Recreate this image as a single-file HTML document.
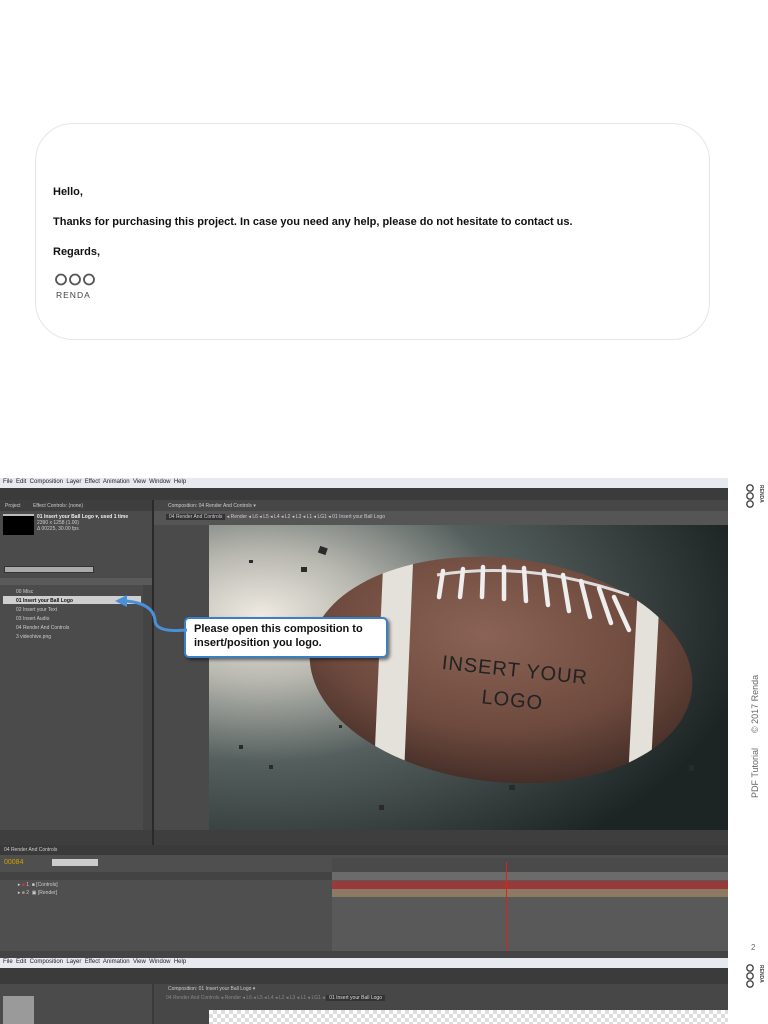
<!DOCTYPE html>
<html><head><meta charset="utf-8"><style>
*{margin:0;padding:0;box-sizing:border-box}
body{width:768px;height:1024px;background:#fff;position:relative;overflow:hidden;font-family:"Liberation Sans",sans-serif}
.card{position:absolute;left:35px;top:123px;width:675px;height:217px;border:1px solid #e6e6e6;border-radius:38px}
.t{position:absolute;left:53px;font-weight:bold;font-size:11px;color:#111}
.logo{position:absolute;left:55px;top:273px}
.ab{position:absolute}
.m{font-size:6px;color:#222}
.s{font-size:5px;color:#ccc}
</style></head><body>
<div class="card"></div>
<div class="t" style="top:186px">Hello,</div>
<div class="t" style="top:216px">Thanks for purchasing this project. In case you need any help, please do not hesitate to contact us.</div>
<div class="t" style="top:246px">Regards,</div>
<svg class="logo" width="46" height="30"><g fill="none" stroke="#555" stroke-width="1.8"><circle cx="6" cy="6.5" r="5"/><circle cx="20" cy="6.5" r="5"/><circle cx="34" cy="6.5" r="5"/></g><text x="1" y="25" font-family="Liberation Sans" font-size="8.5" fill="#444" letter-spacing="1">RENDA</text></svg>

<div class="ab" style="left:0;top:478px;width:728px;height:10px;background:#e6eaf0"></div>
<div class="ab m" style="left:3px;top:479px">File&nbsp; Edit&nbsp; Composition&nbsp; Layer&nbsp; Effect&nbsp; Animation&nbsp; View&nbsp; Window&nbsp; Help</div>
<div class="ab" style="left:0;top:488px;width:728px;height:12px;background:#3b3b3b"></div>
<div class="ab" style="left:0;top:500px;width:152px;height:345px;background:#4b4b4b"></div>
<div class="ab" style="left:0;top:500px;width:152px;height:11px;background:#3e3e3e"></div>
<div class="ab s" style="left:5px;top:503px">Project &nbsp;&nbsp;&nbsp;&nbsp;&nbsp;&nbsp;&nbsp; Effect Controls: (none)</div>
<div class="ab" style="left:3px;top:514px;width:31px;height:21px;background:#000;border-top:2px solid #bbb"></div>
<div class="ab s" style="left:37px;top:514px;color:#eee;font-weight:bold">01 Insert your Ball Logo ▾, used 1 time</div>
<div class="ab s" style="left:37px;top:520px">2390 x 1258 (1.00)<br>Δ 00225, 30.00 fps</div>
<div class="ab" style="left:4px;top:566px;width:90px;height:7px;background:#aaa;border:1px solid #333"></div>
<div class="ab" style="left:0;top:578px;width:152px;height:7px;background:#5a5a5a"></div>
<div class="ab" style="left:3px;top:596px;width:138px;height:8px;background:#cfcfcf"></div>
<div class="ab s" style="left:16px;top:588px;line-height:9px">00 Misc<br><b style="color:#111">01 Insert your Ball Logo</b><br>02 Insert your Text<br>03 Insert Audio<br>04 Render And Controls<br>3 videohive.png</div>
<div class="ab" style="left:143px;top:585px;width:9px;height:245px;background:#444"></div>
<div class="ab" style="left:0;top:830px;width:728px;height:15px;background:#3e3e3e"></div>
<div class="ab" style="left:152px;top:500px;width:2px;height:345px;background:#2a2a2a"></div>
<div class="ab" style="left:154px;top:500px;width:574px;height:25px;background:#474747"></div>
<div class="ab" style="left:154px;top:511px;width:574px;height:14px;background:#555"></div>
<div class="ab s" style="left:168px;top:503px">Composition: 04 Render And Controls ▾</div>
<div class="ab s" style="left:166px;top:514px"><span style="background:#333;padding:0 3px">04 Render And Controls</span> ◂ Render ◂ L6 ◂ L5 ◂ L4 ◂ L2 ◂ L3 ◂ L1 ◂ LG1 ◂ 01 Insert your Ball Logo</div>
<div class="ab" style="left:154px;top:525px;width:55px;height:305px;background:#4a4a4a"></div>
<svg class="ab" style="left:209px;top:525px" width="519" height="305">
<defs>
<radialGradient id="bg" cx="0.1" cy="0.3" r="0.95"><stop offset="0" stop-color="#f0ebe2"/><stop offset="0.22" stop-color="#b8b8b0"/><stop offset="0.5" stop-color="#55605e"/><stop offset="1" stop-color="#1d2424"/></radialGradient>
<radialGradient id="ball" cx="0.45" cy="0.35" r="0.7"><stop offset="0" stop-color="#8a6355"/><stop offset="0.6" stop-color="#6e4a3e"/><stop offset="1" stop-color="#3e2a24"/></radialGradient>
<clipPath id="bc"><ellipse cx="292" cy="145" rx="192" ry="112" transform="rotate(6 292 145)"/></clipPath>
</defs>
<rect width="519" height="305" fill="url(#bg)"/>
<ellipse cx="292" cy="145" rx="192" ry="112" transform="rotate(6 292 145)" fill="url(#ball)"/>
<g clip-path="url(#bc)" fill="#e4e0da"><polygon points="175,20 205,15 195,250 165,245"/><polygon points="430,40 452,45 440,280 418,275"/></g>
<path d="M228 50 Q320 35 420 70" stroke="#ddd" stroke-width="3" fill="none"/>
<g stroke="#eee" stroke-width="4.5" stroke-linecap="round"><line x1="234" y1="46" x2="230" y2="72"/><line x1="254" y1="44" x2="251" y2="72"/><line x1="274" y1="42" x2="273" y2="72"/><line x1="295" y1="42" x2="295" y2="74"/><line x1="315" y1="43" x2="317" y2="76"/><line x1="335" y1="46" x2="339" y2="80"/><line x1="354" y1="50" x2="360" y2="86"/><line x1="372" y1="56" x2="381" y2="92"/><line x1="390" y1="63" x2="402" y2="98"/><line x1="405" y1="72" x2="420" y2="105"/></g>
<text x="232" y="150" font-family="Liberation Sans" font-size="20" fill="#222" transform="rotate(6 290 150)" letter-spacing="1">INSERT YOUR</text>
<text x="275" y="180" font-family="Liberation Sans" font-size="20" fill="#222" transform="rotate(6 290 150)" letter-spacing="1">LOGO</text>
<g fill="#2a2a2a"><rect x="110" y="22" width="8" height="7" transform="rotate(20 114 25)"/><rect x="92" y="42" width="6" height="5"/><rect x="40" y="35" width="4" height="3"/><rect x="300" y="260" width="6" height="5"/><rect x="480" y="240" width="5" height="6"/><rect x="60" y="240" width="4" height="4"/><rect x="170" y="280" width="5" height="5"/><rect x="30" y="220" width="4" height="4"/><rect x="130" y="200" width="3" height="3"/></g>
</svg>
<div class="ab" style="left:184px;top:617px;width:204px;height:41px;background:#fff;border:2px solid #3b7fc4;border-radius:5px;box-shadow:2px 2px 3px rgba(0,0,0,.5);font-size:11px;font-weight:bold;padding:3px 8px;line-height:14px;color:#111">Please open this composition to insert/position you logo.</div>
<svg class="ab" style="left:95px;top:595px" width="95" height="45"><path d="M92 35 Q60 38 60 25 Q58 8 30 6" stroke="#4a90d9" stroke-width="3" fill="none"/><polygon points="20,6 32,0 32,12" fill="#4a90d9"/></svg>
<div class="ab" style="left:0;top:845px;width:728px;height:113px;background:#4f4f4f"></div>
<div class="ab" style="left:0;top:845px;width:728px;height:10px;background:#3a3a3a"></div>
<div class="ab s" style="left:4px;top:847px">04 Render And Controls</div>
<div class="ab" style="left:4px;top:859px;font-size:7px;color:#d4a000">00084</div>
<div class="ab" style="left:52px;top:859px;width:46px;height:7px;background:#ccc"></div>
<div class="ab" style="left:0;top:872px;width:332px;height:8px;background:#434343"></div>
<div class="ab s" style="left:4px;top:881px;line-height:8px">&nbsp;&nbsp;&nbsp;&nbsp;&nbsp;&nbsp;&nbsp;&nbsp;&nbsp;&nbsp;▸ <span style="color:#c33">■</span> 1 &nbsp;■ [Controls]<br>&nbsp;&nbsp;&nbsp;&nbsp;&nbsp;&nbsp;&nbsp;&nbsp;&nbsp;&nbsp;▸ <span style="color:#a98">■</span> 2 &nbsp;▣ [Render]</div>
<div class="ab" style="left:332px;top:858px;width:396px;height:100px;background:#595959"></div>
<div class="ab" style="left:332px;top:858px;width:396px;height:14px;background:#4a4a4a"></div>
<div class="ab" style="left:332px;top:872px;width:396px;height:8px;background:#6b6b6b"></div>
<div class="ab" style="left:332px;top:881px;width:396px;height:8px;background:#983a3a"></div>
<div class="ab" style="left:332px;top:889px;width:396px;height:8px;background:#8c7a62"></div>
<div class="ab" style="left:506px;top:862px;width:1px;height:96px;background:#e02020"></div>
<div class="ab" style="left:0;top:951px;width:728px;height:7px;background:#444"></div>
<div class="ab" style="left:0;top:958px;width:728px;height:10px;background:#e6eaf0"></div>
<div class="ab m" style="left:3px;top:959px">File&nbsp; Edit&nbsp; Composition&nbsp; Layer&nbsp; Effect&nbsp; Animation&nbsp; View&nbsp; Window&nbsp; Help</div>
<div class="ab" style="left:0;top:968px;width:728px;height:56px;background:#3b3b3b"></div>
<div class="ab" style="left:0;top:984px;width:152px;height:40px;background:#4b4b4b"></div>
<div class="ab" style="left:3px;top:996px;width:31px;height:28px;background:#9a9a9a"></div>
<div class="ab" style="left:154px;top:984px;width:574px;height:40px;background:#474747"></div>
<div class="ab s" style="left:168px;top:986px">Composition: 01 Insert your Ball Logo ▾</div>
<div class="ab s" style="left:166px;top:995px;color:#888">04 Render And Controls ◂ Render ◂ L6 ◂ L5 ◂ L4 ◂ L2 ◂ L3 ◂ L1 ◂ LG1 ◂ <span style="background:#333;color:#ddd;padding:0 3px">01 Insert your Ball Logo</span></div>
<div class="ab" style="left:209px;top:1010px;width:519px;height:14px;background-color:#fff;background-image:repeating-conic-gradient(#ddd 0 25%,#fff 0 50%);background-size:8px 8px"></div>
<svg class="ab" style="left:744px;top:484px" width="22" height="28"><g fill="none" stroke="#444" stroke-width="1.4"><circle cx="6" cy="4" r="3.2"/><circle cx="6" cy="12" r="3.2"/><circle cx="6" cy="20" r="3.2"/></g><text transform="translate(16 1) rotate(90)" font-size="5" font-weight="bold" font-family="Liberation Sans" fill="#444">RENDA</text></svg>
<svg class="ab" style="left:744px;top:964px" width="22" height="28"><g fill="none" stroke="#444" stroke-width="1.4"><circle cx="6" cy="4" r="3.2"/><circle cx="6" cy="12" r="3.2"/><circle cx="6" cy="20" r="3.2"/></g><text transform="translate(16 1) rotate(90)" font-size="5" font-weight="bold" font-family="Liberation Sans" fill="#444">RENDA</text></svg>
<div class="ab" style="left:750px;top:798px;transform-origin:0 0;transform:rotate(-90deg);font-size:9px;color:#666;white-space:nowrap">PDF Tutorial &nbsp;&nbsp;&nbsp;&nbsp; © 2017 Renda</div>
<div class="ab" style="left:751px;top:943px;font-size:8px;color:#666">2</div>
</body></html>
